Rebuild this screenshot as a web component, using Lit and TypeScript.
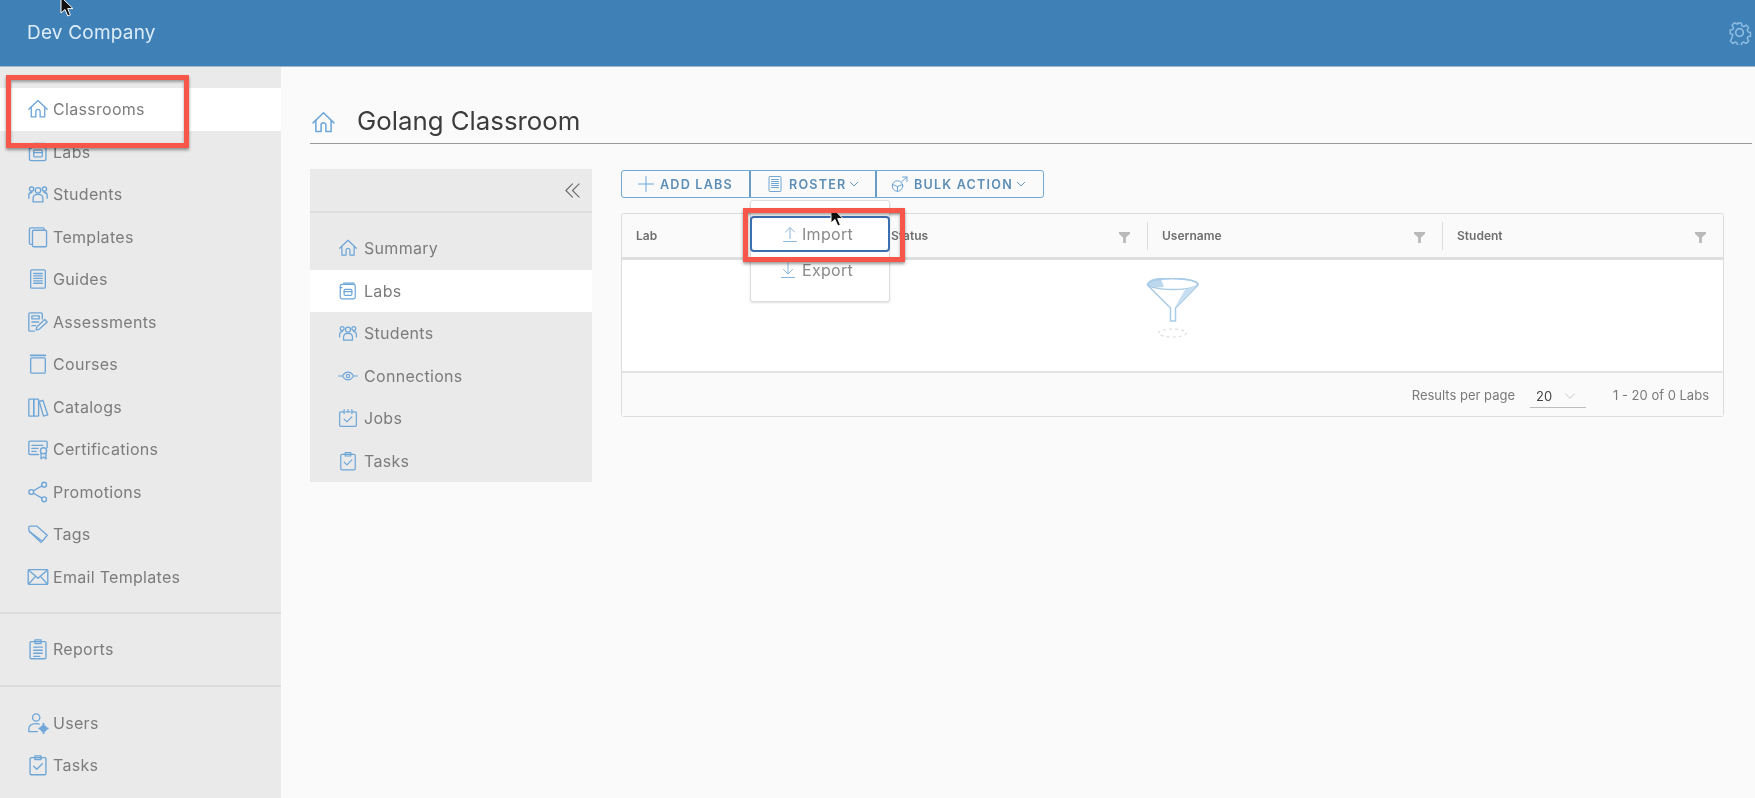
import { LitElement, html, css, svg } from "lit";
import { customElement } from "lit/decorators.js";

const ic: Record<string, unknown> = {
  home: svg`<path d="M3 18.5 18 4l15 14.5"/><path d="M7 15v16h7.5V22a3.5 3.5 0 0 1 7 0v9H29V15"/>`,
  labs: svg`<rect x="4" y="6" width="27" height="26" rx="3"/><path d="M4 12h3M10 4h19"/><rect x="11" y="15" width="14" height="11" rx="2"/><path d="M11 19h14"/>`,
  students: svg`<circle cx="18" cy="12" r="4.5"/><path d="M10 31v-6c0-4 3-6.500 8-6.500s8 2.500 8 6.500v6z"/><circle cx="7.500" cy="10" r="3.500"/><circle cx="28.500" cy="10" r="3.500"/><path d="M3 25v-5c0-3 2-4.500 5-4.500M33 25v-5c0-3-2-4.500-5-4.500"/>`,
  templates: svg`<path d="M8 30H6a2 2 0 0 1-2-2V5a2 2 0 0 1 2-2h20a2 2 0 0 1 2 2v1"/><rect x="9" y="7" width="23" height="27" rx="2"/>`,
  guides: svg`<rect x="6" y="3" width="24" height="30" rx="2"/><path d="M11 9h14M11 13h14M11 17h14M11 21h14M11 25h14"/>`,
  assess: svg`<path d="M25 13V5a2 2 0 0 0-2-2H5a2 2 0 0 0-2 2v26a2 2 0 0 0 2 2h7"/><rect x="8" y="8" width="12" height="5"/><path d="M8 18h11M8 24h6M15 31l1-5L29 14l4 4-13 12z"/>`,
  courses: svg`<rect x="6" y="8" width="24" height="25" rx="2"/><path d="M6 4h24" stroke-width="3"/>`,
  catalogs: svg`<rect x="3" y="5" width="8" height="28" rx="1"/><rect x="11" y="5" width="8" height="28" rx="1"/><path d="M20 9l6-2 8 24-7 2z"/>`,
  cert: svg`<path d="M19 27H5a2 2 0 0 1-2-2V7a2 2 0 0 1 2-2h26a2 2 0 0 1 2 2v9"/><path d="M8 12h18M8 17h10M8 22h7"/><circle cx="27" cy="21" r="5"/><path d="M23 25v9l4-3 4 3v-9"/>`,
  promo: svg`<circle cx="7" cy="18" r="4"/><circle cx="28" cy="6" r="4"/><circle cx="28" cy="30" r="4"/><path d="M10.500 16 24.500 8M10.500 20l14 8"/>`,
  tags: svg`<path d="M3 11V7a2 2 0 0 1 2-2h11l17 15-8 10L4 14z"/><path d="M4 14l19 18"/>`,
  email: svg`<rect x="2" y="6" width="32" height="24" rx="1.500"/><path d="M3 7l15 13L33 7M3 29l11-12M33 29 22 17"/>`,
  reports: svg`<rect x="5" y="6" width="26" height="28" rx="2"/><path d="M13 3h10v6H13zM11 15h14M11 20h14M11 25h14M11 30h10"/>`,
  users: svg`<circle cx="15" cy="9" r="6"/><path d="M3 32v-4c0-6 5-9 12-9 2 0 3 .2 5 .7M3 32h14"/><circle cx="27" cy="27" r="3" stroke-width="5"/><path d="M27 19v3M27 32v3M20 27h3M31 27h3" stroke-width="3"/>`,
  tasks: svg`<rect x="5" y="6" width="26" height="28" rx="2"/><path d="M13 3h10v6H13zM11 20l5 5 9-9"/>`,
  conn: svg`<path d="M1 18h7M28 18h7"/><path d="M8 18c3-5 6.500-7 10-7s7 2 10 7c-3 5-6.500 7-10 7s-7-2-10-7z"/><circle cx="18" cy="18" r="3"/>`,
  jobs: svg`<path d="M10 7H5a2 2 0 0 0-2 2v22a2 2 0 0 0 2 2h26a2 2 0 0 0 2-2V9a2 2 0 0 0-2-2h-5M14 7h8M11 3v7M25 3v7M18 3v4"/><path d="M11 20l5 5 9-9"/>`,
  plus: svg`<path d="M18 3v30M3 18h30"/>`,
  chev: svg`<path d="M5 12l13 13 13-13"/>`,
  up: svg`<path d="M18 27V6M9 14l9-9 9 9M5 33h26"/>`,
  down: svg`<path d="M18 4v21M9 17l9 9 9-9M5 33h26"/>`,
  bulk: svg`<circle cx="13" cy="22" r="10.500"/><path d="M3 19l10 4 10-4M13 23v9.500M21 14 32 4M23 4h9v9"/>`,
  gear: svg`<circle cx="18" cy="18" r="5.500"/><path d="M15 3h6l1 4.500 3 1.300 4-2.400 4 4.300-2.400 4 1.200 2.800 4.200 1v6l-4.200 1-1.200 2.800 2.400 4-4 4.200-4-2.400-3 1.300-1 4.400h-6l-1-4.400-3-1.300-4 2.400-4-4.200 2.400-4L7 21.500l-4.200-1v-6l4.200-1 1.200-2.800-2.400-4 4-4.300 4 2.400 3-1.300z" transform="translate(18 18) scale(.88) translate(-18 -18.500)"/>`,
};

const icon = (n: string, cls = "") =>
  html`<svg class="ico ${cls}" viewBox="0 0 36 36" aria-hidden="true">${ic[n]}</svg>`;

const cursor = (cls: string) =>
  html`<svg class="cursor ${cls}" viewBox="0 0 14 22" aria-hidden="true"><path d="M1 1v16l4-3.500 2.800 6.500 2.600-1.100-2.700-6.300H13z" fill="#111" stroke="#fff" stroke-width="1"/></svg>`;

const mainNav: [string, string][] = [
  ["home", "Classrooms"], ["labs", "Labs"], ["students", "Students"], ["templates", "Templates"],
  ["guides", "Guides"], ["assess", "Assessments"], ["courses", "Courses"], ["catalogs", "Catalogs"],
  ["cert", "Certifications"], ["promo", "Promotions"], ["tags", "Tags"], ["email", "Email Templates"],
];
const subNav: [string, string][] = [
  ["home", "Summary"], ["labs", "Labs"], ["students", "Students"], ["conn", "Connections"], ["jobs", "Jobs"], ["tasks", "Tasks"],
];
const cols = ["Lab", "Status", "Username", "Student"];

@customElement("app-root")
export class AppRoot extends LitElement {
  static styles = css`
    :host { display: block; position: relative; width: 1755px; height: 798px; overflow: hidden; background: #fafafa;
      font-family: "Inter", "Open Sans", sans-serif; color: #7c7c7c; filter: blur(.4px); }
    .ico { display: block; fill: none; stroke: #6ea6d8; stroke-width: 2.200; stroke-linecap: round; stroke-linejoin: round; flex: none; }
    .top { height: 67px; box-sizing: border-box; background: #3f81b7; border-bottom: 1px solid #9fb9cf; display: flex; align-items: center; justify-content: space-between;
      padding: 0 3px 2px 27px; color: #dcecf8; font-size: 19px; letter-spacing: .2px; }
    .top .ico { width: 25px; height: 25px; stroke: #8dbce2; stroke-width: 2.400; }
    .body { display: flex; height: 731px; }
    .side { width: 281px; flex: none; background: #eaeaea; display: flex; flex-direction: column; }
    .grp { padding: 21px 0 13.500px; border-bottom: 2px solid #dcdcdc; }
    .grp.mid { padding: 14.500px 0 14px; }
    .grp.end { padding: 15px 0 0; border: 0; }
    .row { height: 42.500px; display: flex; align-items: center; gap: 4px; padding-left: 27px; font-size: 16px; letter-spacing: .3px; }
    .row .ico { width: 22px; height: 22px; }
    .row.on { background: #fff; }
    .main { flex: 1; padding: 0 3px 0 29px; min-width: 0; }
    .title { height: 77px; box-sizing: border-box; border-bottom: 1px solid #9a9a9a; display: flex; align-items: center; gap: 21px; padding: 30px 0 0 1px;
      font-size: 25.800px; color: #3c3c3c; }
    .title .ico { width: 25px; height: 25px; margin-top: 5px; }
    .content { display: flex; gap: 29px; margin-top: 25px; margin-right: 28px; align-items: flex-start; }
    .sub { width: 282px; flex: none; background: #eaeaea; height: 313px; }
    .subhead { height: 42px; border-bottom: 2px solid #dedede; display: flex; align-items: center; justify-content: flex-end; padding-right: 11px; }
    .subhead .ico { width: 17px; height: 17px; stroke: #6c6c6c; stroke-width: 2.400; }
    .sublist { padding-top: 14px; }
    .sub .row { padding-left: 28px; gap: 6px; }
    .sub .row .ico { width: 20px; height: 20px; }
    .col { flex: 1; min-width: 0; }
    .bar { display: inline-flex; height: 28px; border: 1.500px solid #73a8d0; border-radius: 3px; margin-top: 1px; box-sizing: border-box; color: #5d8eb5;
      font-size: 12.600px; font-weight: 600; letter-spacing: 1.200px; }
    .btn { display: flex; align-items: center; gap: 5px; padding: 0 10px 0 15px; box-sizing: border-box; border-right: 2px solid #6a9dc6; position: relative; white-space: nowrap; }
    .btn:last-child { border-right: 0; padding: 0 10px 0 14px; }
    .btn .ico { width: 18px; height: 18px; stroke-width: 2; }
    .btn .chev { width: 10px; height: 10px; stroke: #5d8eb5; stroke-width: 3.500; margin-left: -2px; }
    .b1 { width: 129px; } .b2 { width: 126px; padding-left: 15px; } .b3 { width: 166px; }
    .menu { position: absolute; left: -1px; top: 29px; width: 140px; height: 102px; box-sizing: border-box; background: #fff; border: 1px solid #dedede; border-radius: 3px;
      box-shadow: 0 1px 2px #0002; padding-top: 15px; z-index: 3; color: #8a8a8a; font-size: 16px; font-weight: 400; letter-spacing: .3px; }
    .item { height: 36px; display: flex; align-items: center; gap: 5px; padding-left: 28px; box-sizing: border-box; }
    .item .ico { width: 18px; height: 18px; stroke: #8ab6da; }
    .item.focus { border: 2px solid #3a6fb0; border-radius: 4px; margin: 0 -1px 0 -1px; padding-left: 29px; gap: 3px; }
    .table { margin-top: 15px; border: 1px solid #dcdcdc; border-radius: 3px; background: #fff; height: 204px; box-sizing: border-box; display: flex; flex-direction: column; }
    .thead { height: 43px; box-sizing: content-box; background: #fafafa; border-bottom: 3px solid #dedede; display: grid; grid-template-columns: 255px 271px 295px 1fr; align-items: center;
      font-size: 12px; font-weight: 600; color: #6f6f6f; border-radius: 3px 3px 0 0; flex: none; }
    .th { height: 28px; display: flex; align-items: center; justify-content: space-between; padding: 0 17px 0 14px; border-right: 1px solid #dcdcdc; }
    .th:last-child { border-right: 0; }
    .th svg { width: 11px; height: 11px; fill: #b9b9b9; flex: none; margin: 3px 0 0 0; }
    .tbody { flex: 1; display: flex; justify-content: center; padding: 18px 0 0 0; }
    .funnel { width: 54px; height: 60px; display: block; }
    .tfoot { height: 45px; flex: none; background: #fafafa; border-top: 2px solid #e4e4e4; display: flex; align-items: center; justify-content: flex-end; padding: 0 14px 0 0;
      font-size: 13px; color: #7a7a7a; box-sizing: border-box; }
    .pager { width: 56px; height: 27px; margin: 0 27px 0 15px; border-bottom: 1px solid #bdbdbd; box-sizing: border-box; display: flex; align-items: center; justify-content: space-between; padding: 4px 10px 0 6px; color: #444; font-size: 13px; }
    .pager .ico { width: 12px; height: 12px; stroke: #b8b8b8; }
    .mark { position: absolute; box-sizing: border-box; border: 5px solid #f6574a; box-shadow: 0 2px 3px #0006, inset 0 2px 3px #0005; z-index: 5; }
    .m1 { left: 6px; top: 75px; width: 183px; height: 73px; }
    .m2 { left: 743px; top: 208px; width: 162px; height: 54px; }
    .cursor { position: absolute; width: 14px; height: 22px; z-index: 4; }
    .c1 { left: 60px; top: -4px; }
    .c2 { left: 830px; top: 206px; }
  `;

  render() {
    return html`
      <div class="top"><span>Dev Company</span>${icon("gear")}</div>
      <div class="body">
        <nav class="side">
          <div class="grp">
            ${mainNav.map(([i, t], k) => html`<div class="row ${k === 0 ? "on" : ""}">${icon(i)}<span>${t}</span></div>`)}
          </div>
          <div class="grp mid"><div class="row">${icon("reports")}<span>Reports</span></div></div>
          <div class="grp end">
            <div class="row">${icon("users")}<span>Users</span></div>
            <div class="row">${icon("tasks")}<span>Tasks</span></div>
          </div>
        </nav>
        <main class="main">
          <div class="title">${icon("home")}<span>Golang Classroom</span></div>
          <div class="content">
            <aside class="sub">
              <div class="subhead"><svg class="ico" viewBox="0 0 36 36"><path d="M18 4 4 18l14 14M32 4 18 18l14 14"/></svg></div>
              <div class="sublist">
                ${subNav.map(([i, t], k) => html`<div class="row ${k === 1 ? "on" : ""}">${icon(i)}<span>${t}</span></div>`)}
              </div>
            </aside>
            <section class="col">
              <div class="bar">
                <div class="btn b1">${icon("plus")}<span>ADD LABS</span></div>
                <div class="btn b2">${icon("guides")}<span>ROSTER</span>${icon("chev", "chev")}
                  <div class="menu">
                    <div class="item focus">${icon("up")}<span>Import</span></div>
                    <div class="item">${icon("down")}<span>Export</span></div>
                  </div>
                </div>
                <div class="btn b3">${icon("bulk")}<span>BULK ACTION</span>${icon("chev", "chev")}</div>
              </div>
              <div class="table">
                <div class="thead">
                  ${cols.map((c) => html`<div class="th"><span>${c}</span><svg viewBox="0 0 12 12"><path d="M0 0h12v2L7.500 6v6h-3V6L0 2z"/></svg></div>`)}
                </div>
                <div class="tbody">
                  <svg class="funnel" viewBox="0 0 54 60" aria-hidden="true">
                    <path d="M1.500 7 C3 1 12 0 27 .5s24 2 25 6.500L29.500 30v13h-5V30z" fill="#fff" stroke="#a9cbe6" stroke-width="1.500"/>
                    <path d="M2 6c1-4 7-5 13-5l3 8C10 10 4 9 2 6z" fill="#bcd8ef"/>
                    <ellipse cx="27" cy="6" rx="25" ry="5.500" fill="none" stroke="#a9cbe6" stroke-width="1.500"/>
                    <path d="M29 29 39 12l12-5z" fill="#c5def2"/>
                    <ellipse cx="26.500" cy="55" rx="14" ry="4" fill="none" stroke="#ddd" stroke-width="1.200" stroke-dasharray="3 3"/>
                  </svg>
                </div>
                <div class="tfoot">
                  <span>Results per page</span>
                  <div class="pager"><span>20</span>${icon("chev")}</div>
                  <span>1 - 20 of 0 Labs</span>
                </div>
              </div>
            </section>
          </div>
        </main>
      </div>
      ${cursor("c1")}${cursor("c2")}
      <div class="mark m1"></div>
      <div class="mark m2"></div>
    `;
  }
}
